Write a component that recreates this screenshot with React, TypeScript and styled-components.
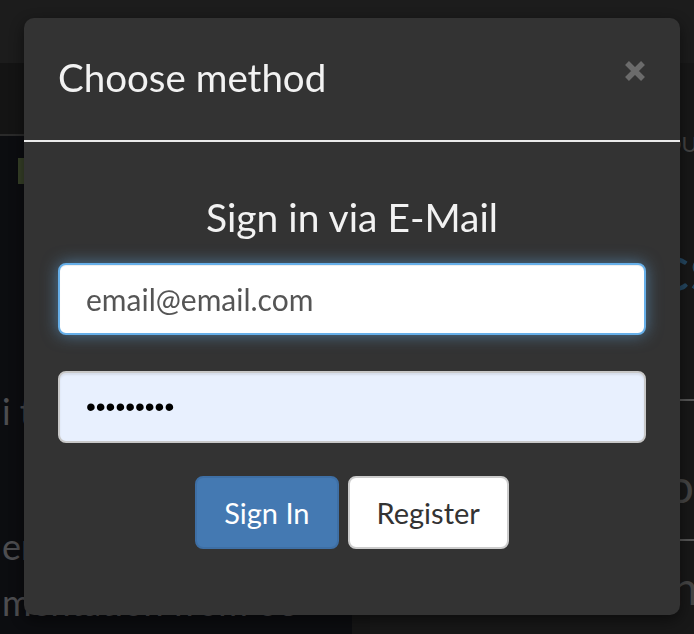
import React from "react";
import styled, { createGlobalStyle } from "styled-components";

const GlobalStyle = createGlobalStyle`
  html, body {
    margin: 0;
    padding: 0;
    background: #181a20;
  }
  body {
    font-family: Lato, "Liberation Sans", sans-serif;
    overflow: hidden;
  }
  * {
    box-sizing: border-box;
  }
`;

/* ---- page behind the modal ---- */

const Page = styled.div`
  width: 694px;
  height: 634px;
  overflow: hidden;
  display: flex;
  flex-direction: column;
  background: #181a20;
`;

const Navbar = styled.div`
  height: 63px;
  flex-shrink: 0;
  background: #383838;
`;

const Columns = styled.div`
  flex: 1;
  display: grid;
  grid-template-columns: 352px 18px 1fr;
`;

const LeftColumn = styled.div`
  display: flex;
  flex-direction: column;
  align-items: flex-start;
  background: #181a20;
`;

const SubBar = styled.div`
  align-self: stretch;
  height: 73px;
  background: #282828;
  border-bottom: 2px solid #545454;
`;

const Tag = styled.span`
  margin: 22px 0 0 18px;
  width: 60px;
  height: 26px;
  background: #6e8250;
`;

const GhostText = styled.div<{ $gap: number }>`
  margin-top: ${(p) => p.$gap}px;
  padding-left: 2px;
  font-size: 36px;
  line-height: 40px;
  color: #9a9aa0;
  white-space: nowrap;
`;

const Gutter = styled.div`
  background: #2c2c2c;
`;

const RightColumn = styled.div`
  display: flex;
  flex-direction: column;
  align-items: flex-end;
  background: #303030;
  overflow: hidden;
`;

const RightText = styled.div<{ $gap: number; $size: number; $color: string; $shift: number }>`
  margin-top: ${(p) => p.$gap}px;
  margin-right: ${(p) => p.$shift}px;
  font-size: ${(p) => p.$size}px;
  line-height: 1;
  color: ${(p) => p.$color};
  white-space: nowrap;
`;

const RightRule = styled.div<{ $gap: number }>`
  align-self: stretch;
  margin-top: ${(p) => p.$gap}px;
  border-top: 2px solid #aaaaaa;
`;

const Backdrop = styled.div`
  position: fixed;
  inset: 0;
  background: rgba(0, 0, 0, 0.5);
`;

/* ---- modal ---- */

const Modal = styled.div`
  position: fixed;
  top: 18px;
  left: 24px;
  width: 656px;
  background: #333333;
  border-radius: 10px;
  box-shadow: 0 5px 15px rgba(0, 0, 0, 0.5);
  font-family: Lato, "Liberation Sans", sans-serif;
`;

const Header = styled.div`
  height: 124px;
  display: flex;
  justify-content: space-between;
  align-items: flex-start;
  padding: 40px 34px 0 34px;
  border-bottom: 2px solid #ebebeb;
`;

const Title = styled.h4`
  margin: 0;
  font-size: 38.5px;
  font-weight: 400;
  line-height: 1;
  color: #f2f2f2;
`;

const CloseButton = styled.button`
  margin-top: 2px;
  padding: 0;
  width: 22px;
  height: 22px;
  border: 0;
  background: none;
  cursor: pointer;
  display: flex;
`;

const Body = styled.div`
  display: flex;
  flex-direction: column;
  align-items: center;
  padding: 0 34px 66px;
`;

const Heading = styled.h3`
  margin: 56px 0 0;
  font-size: 39px;
  font-weight: 400;
  line-height: 38px;
  color: #f2f2f2;
`;

const Field = styled.input<{ $focused?: boolean; $gap: number }>`
  width: 100%;
  height: 72px;
  margin-top: ${(p) => p.$gap}px;
  padding: 0 26px;
  font-family: ${(p) =>
    p.$focused ? 'Lato, "Liberation Sans", sans-serif' : '"Liberation Sans", Arial, sans-serif'};
  font-size: ${(p) => (p.$focused ? 30 : 28)}px;
  border-radius: 8px;
  outline: none;
  color: ${(p) => (p.$focused ? "#555555" : "#000000")};
  background: ${(p) => (p.$focused ? "#ffffff" : "#e8f0fe")};
  border: 2px solid ${(p) => (p.$focused ? "#66afe9" : "#c8c8c8")};
  box-shadow: ${(p) =>
    p.$focused
      ? "inset 0 1px 1px rgba(0,0,0,.075), 0 0 16px rgba(102,175,233,.55)"
      : "inset 0 2px 2px rgba(0,0,0,.075)"};
`;

const Actions = styled.div`
  display: flex;
  gap: 9px;
  margin-top: 33px;
`;

const Button = styled.button<{ $primary?: boolean }>`
  height: 73px;
  padding: 0 27px;
  font-family: Lato, "Liberation Sans", sans-serif;
  font-size: 29px;
  border-radius: 8px;
  cursor: pointer;
  color: ${(p) => (p.$primary ? "#ffffff" : "#333333")};
  background: ${(p) => (p.$primary ? "#4479b2" : "#ffffff")};
  border: 2px solid ${(p) => (p.$primary ? "#3e6fa5" : "#cccccc")};
`;

const CloseIcon = () => (
  <svg width="22" height="22" viewBox="0 0 22 22">
    <path d="M3 3 L19 19 M19 3 L3 19" stroke="#6b6b6b" strokeWidth="5.5" />
  </svg>
);

export default function App() {
  return (
    <>
      <GlobalStyle />
      <Page>
        <Navbar />
        <Columns>
          <LeftColumn>
            <SubBar />
            <Tag />
            <GhostText $gap={207}>i the list</GhostText>
            <GhostText $gap={95}>ere you go</GhostText>
            <GhostText $gap={16}>mentation from 03</GhostText>
          </LeftColumn>
          <Gutter />
          <RightColumn>
            <RightText $gap={70} $size={22} $color="#888888" $shift={-17}>
              GROUP
            </RightText>
            <RightText $gap={78} $size={66} $color="#4a90c4" $shift={-24}>
              Docs
            </RightText>
            <RightRule $gap={100} />
            <RightText $gap={62} $size={46} $color="#8a8a8a" $shift={-26}>
              Boo
            </RightText>
            <RightRule $gap={30} />
            <RightText $gap={24} $size={46} $color="#8a8a8a" $shift={-4}>
              Push
            </RightText>
          </RightColumn>
        </Columns>
      </Page>
      <Backdrop />
      <Modal>
        <Header>
          <Title>Choose method</Title>
          <CloseButton aria-label="Close">
            <CloseIcon />
          </CloseButton>
        </Header>
        <Body>
          <Heading>Sign in via E-Mail</Heading>
          <Field $focused $gap={27} type="email" defaultValue="email@email.com" />
          <Field $gap={36} type="password" defaultValue="123456789" />
          <Actions>
            <Button $primary>Sign In</Button>
            <Button>Register</Button>
          </Actions>
        </Body>
      </Modal>
    </>
  );
}
